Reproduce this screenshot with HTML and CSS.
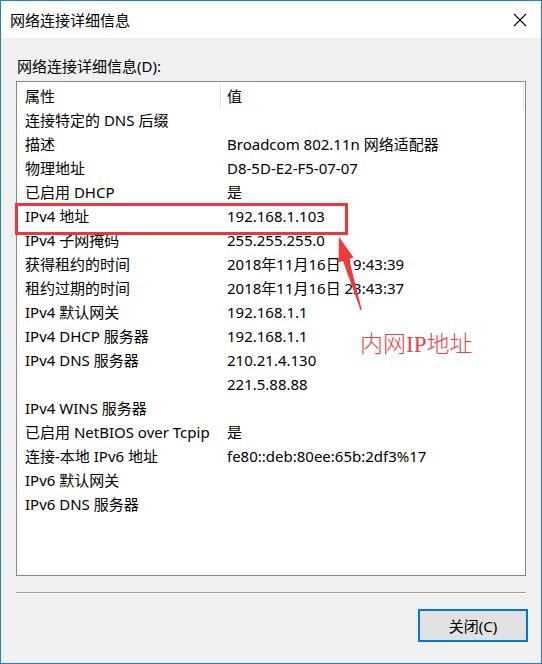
FILE: index.html
```html
<!DOCTYPE html>
<html>
<head>
<meta charset="utf-8">
<link rel="stylesheet" href="styles.css">
</head>
<body>
<div class="window">
  <div class="titlebar">
    <span class="title">网络连接详细信息</span>
    <svg class="close" width="14" height="14" viewBox="0 0 14 14"><path d="M1 1 L13 13 M13 1 L1 13" stroke="#000" stroke-width="1.1" fill="none"/></svg>
  </div>
  <div class="content">
    <div class="label">网络连接详细信息(D):</div>
    <div class="list">
      <div class="header">
        <div class="hcell c1">属性</div>
        <div class="hcell c2">值</div>
      </div>
      <div class="row"><div class="cell c1">连接特定的 DNS 后缀</div><div class="cell c2"></div></div>
      <div class="row"><div class="cell c1">描述</div><div class="cell c2">Broadcom 802.11n 网络适配器</div></div>
      <div class="row"><div class="cell c1">物理地址</div><div class="cell c2">D8-5D-E2-F5-07-07</div></div>
      <div class="row"><div class="cell c1">已启用 DHCP</div><div class="cell c2">是</div></div>
      <div class="row"><div class="cell c1">IPv4 地址</div><div class="cell c2">192.168.1.103</div></div>
      <div class="row"><div class="cell c1">IPv4 子网掩码</div><div class="cell c2">255.255.255.0</div></div>
      <div class="row"><div class="cell c1">获得租约的时间</div><div class="cell c2">2018年11月16日 19:43:39</div></div>
      <div class="row"><div class="cell c1">租约过期的时间</div><div class="cell c2">2018年11月16日 23:43:37</div></div>
      <div class="row"><div class="cell c1">IPv4 默认网关</div><div class="cell c2">192.168.1.1</div></div>
      <div class="row"><div class="cell c1">IPv4 DHCP 服务器</div><div class="cell c2">192.168.1.1</div></div>
      <div class="row"><div class="cell c1">IPv4 DNS 服务器</div><div class="cell c2">210.21.4.130</div></div>
      <div class="row"><div class="cell c1"></div><div class="cell c2">221.5.88.88</div></div>
      <div class="row"><div class="cell c1">IPv4 WINS 服务器</div><div class="cell c2"></div></div>
      <div class="row"><div class="cell c1">已启用 NetBIOS over Tcpip</div><div class="cell c2">是</div></div>
      <div class="row"><div class="cell c1">连接-本地 IPv6 地址</div><div class="cell c2">fe80::deb:80ee:65b:2df3%17</div></div>
      <div class="row"><div class="cell c1">IPv6 默认网关</div><div class="cell c2"></div></div>
      <div class="row"><div class="cell c1">IPv6 DNS 服务器</div><div class="cell c2"></div></div>
    </div>
    <div class="separator"></div>
    <div class="buttons">
      <button class="btn">关闭(C)</button>
    </div>
  </div>

  <div class="highlight"></div>
  <svg class="arrow" width="542" height="664" viewBox="0 0 542 664">
    <polygon points="339,237 353.5,257.5 349,259 361.8,310 360.6,310.3 343,261 338.5,262.5" fill="#f03a3a"/>
  </svg>
  <div class="annotation">内网IP地址</div>
</div>
</body>
</html>
```

FILE: styles.css
```css
html, body {
  margin: 0;
  padding: 0;
}
body {
  font-family: "Noto Sans", "Noto Sans CJK SC", sans-serif;
  font-size: 15px;
  color: #000;
}
.window {
  position: relative;
  width: 542px;
  height: 664px;
  box-sizing: border-box;
  border: 1px solid #1a83d8;
  background: #f0f0f0;
  display: flex;
  flex-direction: column;
  overflow: hidden;
}
.titlebar {
  height: 37px;
  background: #fff;
  display: flex;
  align-items: center;
  justify-content: space-between;
  padding: 0 14px 0 9px;
}
.title {
  font-size: 15px;
  line-height: 20px;
}
.close {
  display: block;
}
.content {
  padding: 18px 15px 0 15px;
  display: flex;
  flex-direction: column;
}
.label {
  line-height: 20px;
  height: 20px;
  margin-left: 1px;
  margin-bottom: 5px;
}
.list {
  height: 495px;
  box-sizing: border-box;
  border: 1px solid #828790;
  background: #fff;
}
.header {
  display: flex;
  height: 26px;
}
.hcell {
  box-sizing: border-box;
  border-right: 1px solid #e5e5e5;
  margin-top: 1px;
  height: 25px;
  line-height: 26px;
}
.hcell.c1 {
  width: 204px;
  padding-left: 8px;
}
.hcell.c2 {
  width: 303px;
  padding-left: 6px;
}
.row {
  display: flex;
  height: 24px;
  line-height: 24px;
  white-space: nowrap;
}
.cell.c1 {
  width: 204px;
  box-sizing: border-box;
  padding-left: 8px;
}
.cell.c2 {
  padding-left: 6px;
}
.separator {
  margin-top: 16px;
  border-top: 1px solid #a0a0a0;
  border-bottom: 1px solid #fff;
}
.buttons {
  display: flex;
  justify-content: flex-end;
  margin-top: 15px;
  margin-right: -2px;
}
.btn {
  width: 110px;
  height: 33px;
  box-sizing: border-box;
  border: 2px solid #0078d7;
  background: #e1e1e1;
  font-family: "Noto Sans", "Noto Sans CJK SC", sans-serif;
  font-size: 15px;
  color: #000;
  padding: 0;
  line-height: 28px;
}
.highlight {
  position: absolute;
  left: 14px;
  top: 202px;
  width: 333px;
  height: 32px;
  box-sizing: border-box;
  border: 3px solid #e8383d;
}
.arrow {
  position: absolute;
  left: -1px;
  top: -1px;
}
.annotation {
  position: absolute;
  left: 359px;
  top: 330px;
  font-family: "Liberation Serif", "Noto Sans CJK SC", serif;
  font-size: 23px;
  line-height: 28px;
  color: #ea4444;
  font-weight: 300;
}
```
